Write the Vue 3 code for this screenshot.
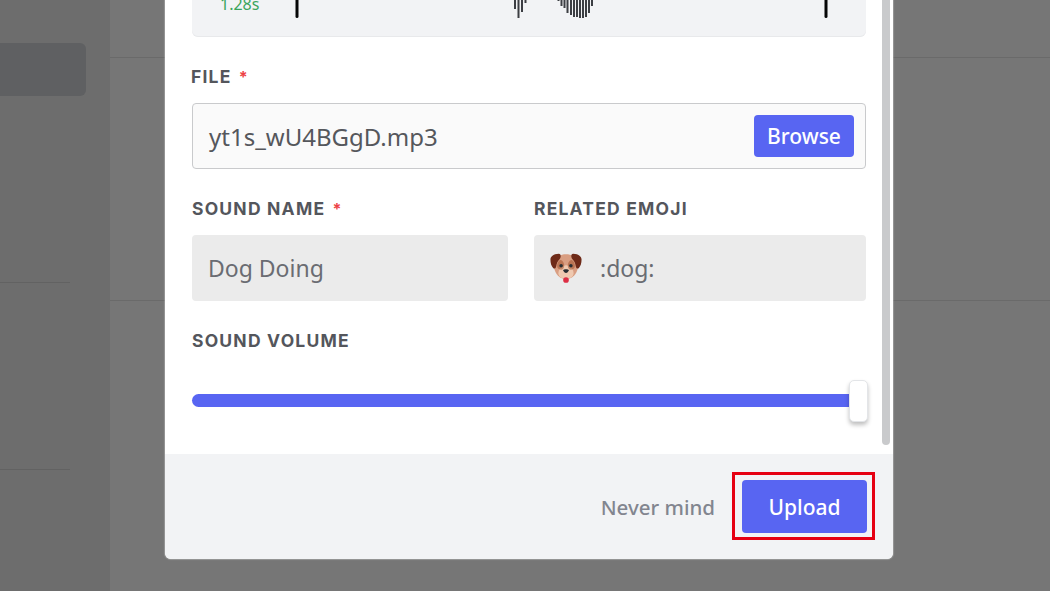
<template>
  <div class="page">
    <div class="sidebar">
      <div class="side-pill"></div>
      <div class="side-line first"></div>
      <div class="side-line second"></div>
    </div>
    <div class="content">
      <div class="content-line first"></div>
      <div class="content-line second"></div>
    </div>

    <div class="overlay">
      <div class="modal">
        <div class="modal-body">
          <div class="preview">
            <span class="duration">1.28s</span>
            <svg class="wave" width="674" height="80" viewBox="0 0 674 80">
              <rect x="103.500" y="0" width="3" height="80" rx="1.500" fill="#060607" />
              <rect x="632.500" y="0" width="3" height="80" rx="1.500" fill="#060607" />
              <rect
                v-for="bar in bars"
                :key="bar.x"
                :x="bar.x - 192"
                :y="40 - bar.half"
                width="2"
                :height="bar.half * 2"
                fill="#3c3e43"
              />
            </svg>
          </div>

          <label class="field-label file-label">FILE <span class="req">*</span></label>
          <div class="file-input">
            <span class="file-name">yt1s_wU4BGgD.mp3</span>
            <button class="btn-browse">Browse</button>
          </div>

          <div class="two-cols">
            <div class="col">
              <label class="field-label">SOUND NAME <span class="req">*</span></label>
              <div class="text-input">Dog Doing</div>
            </div>
            <div class="col">
              <label class="field-label">RELATED EMOJI</label>
              <div class="text-input emoji-input">
                <svg class="dog" width="32" height="32" viewBox="0 0 36 36">
                  <path fill="#D99E82" d="M18 2.500C10 2.500 4.500 7 4.500 15c0 6.500 3 11 6.500 13.500 2 1.400 4.500 2 7 2s5-.6 7-2c3.500-2.500 6.500-7 6.500-13.500 0-8-5.500-12.500-13.500-12.500z" />
                  <path fill="#EFC9B0" d="M18 15c-4.500 0-8.500 4.500-8.500 9 0 3.500 3.500 6.500 8.500 6.500s8.500-3 8.500-6.500c0-4.500-4-9-8.500-9z" />
                  <path fill="#6E2A18" d="M10 2C5 2 .5 4.500.5 8.500c0 4 1 7.500 3 9.500 1.700 1.500 3 .2 3.500-2 .6-3 1.200-5.500 3.500-7.500 1.800-1.600 2.500-6.500-.5-6.500zM26 2c5 0 9.500 2.500 9.500 6.500 0 4-1 7.500-3 9.500-1.700 1.500-3 .2-3.500-2-.6-3-1.200-5.500-3.500-7.500-1.800-1.600-2.500-6.500.5-6.500z" />
                  <path fill="#A0522D" opacity="0.55" d="M11.500 9c-2.500 1-3.500 4-3.500 7 0 2.500 2.500 4 4.500 4s3.500-2 3.500-4.500c0-3-2-7-4.500-6.500zM24.500 9c2.500 1 3.500 4 3.500 7 0 2.500-2.500 4-4.500 4S20 18 20 15.500c0-3 2-7 4.500-6.500z" />
                  <circle cx="12.500" cy="15.500" r="2" fill="#292F33" />
                  <circle cx="23.500" cy="15.500" r="2" fill="#292F33" />
                  <path fill="#292F33" d="M15 20.500c0-1.300 6-1.300 6 0 0 1.400-2 3.200-3 3.200s-3-1.800-3-3.200z" />
                  <circle cx="18" cy="31.500" r="3.200" fill="#DD2E44" />
                </svg>
                <span>:dog:</span>
              </div>
            </div>
          </div>

          <label class="field-label volume-label">SOUND VOLUME</label>
          <div class="slider">
            <div class="slider-track"></div>
            <div class="slider-handle"></div>
          </div>

          <div class="scrollbar"></div>
        </div>

        <div class="modal-footer">
          <span class="never-mind">Never mind</span>
          <button class="btn-upload">Upload</button>
        </div>
      </div>
    </div>
  </div>
</template>

<script setup>
const bars = [
  { x: 514, half: 31 },
  { x: 517.5, half: 40 },
  { x: 521, half: 34 },
  { x: 524.5, half: 25 },
  { x: 557.5, half: 23 },
  { x: 560.5, half: 28 },
  { x: 563.5, half: 30 },
  { x: 566.5, half: 35 },
  { x: 570, half: 37 },
  { x: 573, half: 39 },
  { x: 576, half: 39 },
  { x: 579, half: 40 },
  { x: 582, half: 40 },
  { x: 585, half: 39 },
  { x: 588, half: 35 },
  { x: 591, half: 28 }
];
</script>

<style>
html, body {
  margin: 0;
  height: 100%;
  overflow: hidden;
}
</style>

<style scoped>
.page {
  position: relative;
  display: flex;
  width: 1050px;
  height: 591px;
  overflow: hidden;
  background: #767676;
  font-family: "Noto Sans", "Open Sans", sans-serif;
}

.sidebar {
  width: 110px;
  height: 100%;
  background: #6d6d6d;
  flex-shrink: 0;
  display: flex;
  flex-direction: column;
}

.side-pill {
  margin-top: 43px;
  height: 53px;
  width: 86px;
  background: #5f6062;
  border-radius: 0 6px 6px 0;
}

.side-line {
  height: 1px;
  width: 70px;
  background: #626262;
}

.side-line.first {
  margin-top: 186px;
}

.side-line.second {
  margin-top: 186px;
}

.content {
  flex: 1;
}

.content-line {
  height: 1px;
  background: #6a6a6a;
}

.content-line.first {
  margin-top: 57px;
}

.content-line.second {
  margin-top: 242px;
}

.overlay {
  position: absolute;
  left: 165px;
  bottom: 32px;
  width: 728px;
}

.modal {
  background: #fff;
  border-radius: 6px;
  overflow: hidden;
  box-shadow: 0 0 1px 1px rgba(255, 255, 255, 0.25);
}

.modal-body {
  position: relative;
  padding: 0 27px 47px;
}

.preview {
  display: flex;
  flex-direction: column;
  position: relative;
  width: 674px;
  padding: 0 0 19px;
  background: #f2f3f5;
  border-radius: 0 0 6px 6px;
  box-shadow: inset 0 -1px 0 #e8e9eb;
}

.duration {
  position: absolute;
  left: 28px;
  bottom: 24px;
  font-size: 16px;
  line-height: 18px;
  color: #3ba55c;
}

.wave {
  display: block;
}

.field-label {
  display: block;
  font-family: Inter, "Noto Sans", sans-serif;
  font-size: 17.500px;
  line-height: 20px;
  font-weight: 700;
  letter-spacing: 1.200px;
  color: #54565c;
}

.file-label {
  margin-top: 30px;
  margin-left: -1px;
}

.req {
  color: #ed4245;
  margin-left: 2px;
  font-size: 16px;
}

.file-input {
  display: flex;
  align-items: center;
  justify-content: space-between;
  height: 66px;
  box-sizing: border-box;
  margin-top: 16px;
  padding: 0 11px 0 16px;
  background: #fafafa;
  border: 1px solid #c9cacc;
  border-radius: 4px;
}

.file-name {
  font-size: 24px;
  color: #55575c;
}

.btn-browse {
  width: 100px;
  height: 42px;
  border: none;
  border-radius: 4px;
  background: #5865f2;
  color: #fff;
  font-family: inherit;
  font-size: 21px;
  font-weight: 500;
  padding: 0;
}

.two-cols {
  display: flex;
  gap: 26px;
  margin-top: 30px;
}

.col {
  flex: 1;
  min-width: 0;
}

.col:first-child {
  flex: 0 0 316px;
}

.text-input {
  display: flex;
  align-items: center;
  height: 66px;
  box-sizing: border-box;
  margin-top: 16px;
  padding: 0 16px;
  background: #ebebeb;
  border-radius: 4px;
  font-size: 23px;
  color: #6a6c72;
}

.emoji-input {
  gap: 18px;
}

.dog {
  flex-shrink: 0;
}

.volume-label {
  margin-top: 30px;
}

.slider {
  position: relative;
  margin-top: 43px;
  height: 13px;
}

.slider-track {
  width: 658px;
  height: 13px;
  background: #5865f2;
  border-radius: 7px 0 0 7px;
}

.slider-handle {
  position: absolute;
  left: 657px;
  top: -14px;
  width: 19px;
  height: 42px;
  box-sizing: border-box;
  background: #fff;
  border: 1px solid #e3e5e8;
  border-radius: 5px;
  box-shadow: 0 3px 4px rgba(0, 0, 0, 0.25);
}

.scrollbar {
  position: absolute;
  right: 3px;
  top: -100px;
  bottom: 9px;
  width: 8px;
  background: #c9cacc;
  border-radius: 0 0 4px 4px;
}

.modal-footer {
  display: flex;
  align-items: center;
  justify-content: flex-end;
  gap: 27px;
  height: 105px;
  padding: 0 26px 0 0;
  background: #f2f3f5;
}

.never-mind {
  font-size: 20.500px;
  font-weight: 500;
  color: #82858f;
}

.btn-upload {
  position: relative;
  width: 125px;
  height: 53px;
  border: none;
  border-radius: 4px;
  background: #5865f2;
  color: #fff;
  font-family: inherit;
  font-size: 21px;
  font-weight: 500;
  padding: 0;
}

.btn-upload::after {
  content: "";
  position: absolute;
  left: -10px;
  right: -8px;
  top: -8px;
  bottom: -7px;
  border: 3px solid #e60012;
}
</style>
